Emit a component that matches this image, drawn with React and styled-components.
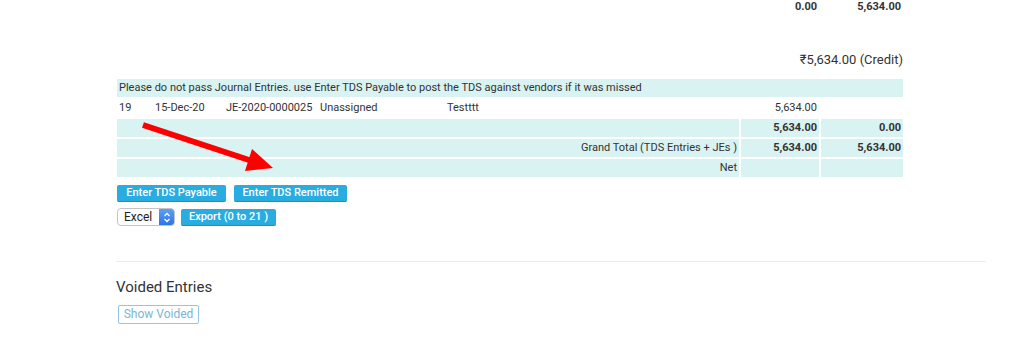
import React from 'react';
import styled, { createGlobalStyle } from 'styled-components';

const GlobalStyle = createGlobalStyle`
  html, body {
    margin: 0;
    padding: 0;
    background: #ffffff;
    font-family: Roboto, "Liberation Sans", Arial, sans-serif;
    color: #333333;
  }
`;

const Page = styled.div`
  position: relative;
  width: 1012px;
  height: 340px;
  overflow: hidden;
  padding-left: 115px;
  box-sizing: border-box;
`;

const TotalsRow = styled.div`
  display: flex;
  justify-content: flex-end;
  gap: 2px;
  width: 790px;
  padding-right: 3px;
  box-sizing: border-box;
  height: 14px;
  line-height: 14px;
`;

const TotalCell = styled.div`
  width: ${p => p.w}px;
  text-align: right;
  font-size: 11px;
  font-weight: 700;
  padding-right: 1px;
  box-sizing: border-box;
`;

const Balance = styled.div`
  width: 788px;
  margin-top: 38px;
  text-align: right;
  font-size: 13px;
  line-height: 16px;
  color: #333;
`;

const Table = styled.table`
  margin-top: 9px;
  width: 790px;
  table-layout: fixed;
  border-collapse: separate;
  border-spacing: 2px;
  font-size: 11px;
`;

const Row = styled.tr`
  height: 18px;
`;

const Cell = styled.td`
  height: 18px;
  padding: 0 2px;
  box-sizing: border-box;
  background: ${p => (p.shade ? '#d9f2f2' : 'transparent')};
  text-align: ${p => (p.right ? 'right' : 'left')};
  font-weight: ${p => (p.bold ? 700 : 400)};
  white-space: nowrap;
  overflow: hidden;
  line-height: 18px;
`;

const ButtonRow = styled.div`
  display: flex;
  align-items: center;
  gap: ${p => p.gap}px;
  margin-top: ${p => p.top}px;
  margin-left: 2px;
`;

const BlueButton = styled.button`
  height: 17px;
  width: ${p => p.w}px;
  padding: 0;
  border: none;
  border-bottom: 1px solid #1c8fbd;
  border-radius: 2px;
  background: #29ace0;
  color: #ffffff;
  font-family: Roboto, "Liberation Sans", Arial, sans-serif;
  font-size: 11px;
  font-weight: 500;
  line-height: 16px;
  cursor: pointer;
`;

const SelectBox = styled.div`
  display: flex;
  align-items: stretch;
  width: 58px;
  height: 18px;
  border: 1px solid #c4c4c4;
  border-radius: 4px;
  box-sizing: border-box;
  overflow: hidden;
  background: #fff;
`;

const SelectLabel = styled.span`
  flex: 1;
  font-size: 12px;
  line-height: 16px;
  padding-left: 6px;
  color: #222;
`;

const Stepper = styled.span`
  width: 15px;
  display: flex;
  align-items: center;
  justify-content: center;
  background: linear-gradient(#5aa0f7, #2f74e8);
`;

const Divider = styled.hr`
  margin: 35px 0 0 1px;
  width: 870px;
  border: none;
  border-top: 1px solid #ebebeb;
  height: 0;
`;

const SectionTitle = styled.div`
  margin-top: 16px;
  margin-left: 1px;
  font-size: 15px;
  line-height: 18px;
  color: #333;
`;

const OutlineButton = styled.button`
  margin-top: 9px;
  margin-left: 3px;
  height: 19px;
  width: 81px;
  padding: 0;
  background: #fff;
  border: 1px solid #8ec8e6;
  border-radius: 2px;
  color: #78b6da;
  font-family: Roboto, "Liberation Sans", Arial, sans-serif;
  font-size: 12px;
  line-height: 17px;
  display: block;
`;

const ArrowOverlay = styled.svg`
  position: absolute;
  left: 0;
  top: 0;
  pointer-events: none;
`;

const widths = [34, 69, 92, 125, 294, 78, 82];

export default function App() {
  return (
    <>
      <GlobalStyle />
      <Page>
        <TotalsRow>
          <TotalCell w={78}>0.00</TotalCell>
          <TotalCell w={82}>5,634.00</TotalCell>
        </TotalsRow>
        <Balance>₹5,634.00 (Credit)</Balance>

        <Table>
          <colgroup>
            {widths.map((w, i) => (
              <col key={i} style={{ width: w }} />
            ))}
          </colgroup>
          <tbody>
            <Row>
              <Cell shade colSpan={7}>
                Please do not pass Journal Entries. use Enter TDS Payable to post the TDS against vendors if it was missed
              </Cell>
            </Row>
            <Row>
              <Cell>19</Cell>
              <Cell>15-Dec-20</Cell>
              <Cell>JE-2020-0000025</Cell>
              <Cell>Unassigned</Cell>
              <Cell>Testttt</Cell>
              <Cell right>5,634.00</Cell>
              <Cell></Cell>
            </Row>
            <Row>
              <Cell shade colSpan={5}></Cell>
              <Cell shade right bold>5,634.00</Cell>
              <Cell shade right bold>0.00</Cell>
            </Row>
            <Row>
              <Cell shade right colSpan={5}>Grand Total (TDS Entries + JEs )</Cell>
              <Cell shade right bold>5,634.00</Cell>
              <Cell shade right bold>5,634.00</Cell>
            </Row>
            <Row>
              <Cell shade right colSpan={5}>Net</Cell>
              <Cell shade></Cell>
              <Cell shade></Cell>
            </Row>
          </tbody>
        </Table>

        <ButtonRow top={6} gap={8}>
          <BlueButton w={109}>Enter TDS Payable</BlueButton>
          <BlueButton w={113}>Enter TDS Remitted</BlueButton>
        </ButtonRow>

        <ButtonRow top={6} gap={6}>
          <SelectBox>
            <SelectLabel>Excel</SelectLabel>
            <Stepper>
              <svg width="8" height="11" viewBox="0 0 8 11" fill="none" stroke="#fff" strokeWidth="1.3">
                <path d="M1.5 4 L4 1.5 L6.5 4" />
                <path d="M1.5 7 L4 9.5 L6.5 7" />
              </svg>
            </Stepper>
          </SelectBox>
          <BlueButton w={95}>Export (0 to 21 )</BlueButton>
        </ButtonRow>

        <Divider />
        <SectionTitle>Voided Entries</SectionTitle>
        <OutlineButton>Show Voided</OutlineButton>

        <ArrowOverlay width="1012" height="340">
          <line x1="143" y1="125" x2="252" y2="161" stroke="#ff0000" strokeWidth="6" />
          <polygon points="273,168 252,149 245,171" fill="#ff0000" />
        </ArrowOverlay>
      </Page>
    </>
  );
}
